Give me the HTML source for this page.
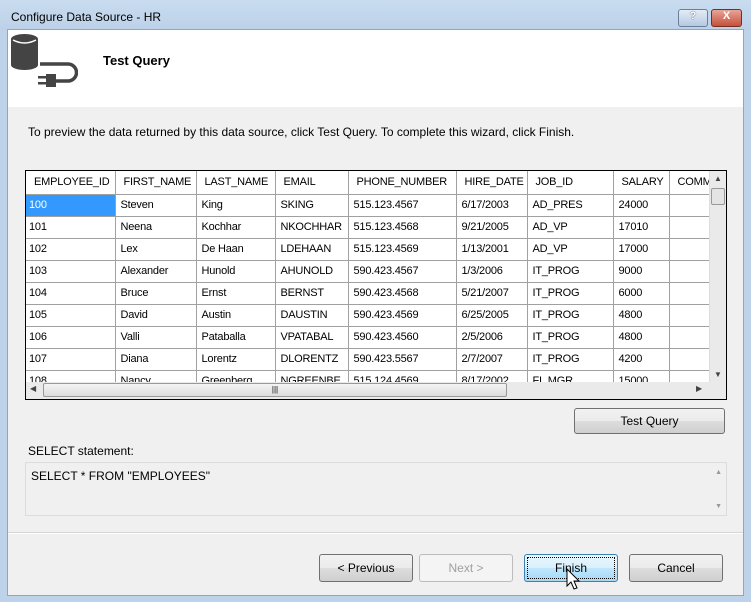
<!DOCTYPE html>
<html><head><style>
*{box-sizing:border-box;margin:0;padding:0}
body{width:751px;height:602px;position:relative;overflow:hidden;background:#bcd3ea;font-family:"Liberation Sans",sans-serif;font-size:12px;color:#000}
.title{position:absolute;left:0;top:0;width:751px;height:30px;background:linear-gradient(#c9dcf0,#bcd1e8)}
.title span{position:absolute;left:11px;top:10px;font-size:12px}
.content{position:absolute;left:7px;top:29px;width:737px;height:567px;background:#f0f0f0;border:1px solid #8ea6c0}
.hdr{position:absolute;left:0;top:0;width:735px;height:77px;background:#fff}
.btn{position:absolute;height:28px;border:1px solid #707070;border-radius:3px;background:linear-gradient(#f2f2f2 0,#ebebeb 50%,#dddddd 51%,#cfcfcf 100%);text-align:center;line-height:26px;font-size:12px}
.grid{position:absolute;left:25px;top:170px;width:702px;height:230px;border:1px solid #000;background:#fff;overflow:hidden}
table{border-collapse:collapse;position:absolute;left:0;top:0;table-layout:fixed;width:703px}
td{border-right:1px solid #a0a0a0;border-bottom:1px solid #a0a0a0;height:22px;padding-left:5px;white-space:nowrap;overflow:hidden;font-size:11px;letter-spacing:-0.2px}
tr.h td{background:#fff;height:23px;padding-left:8px}
</style></head><body>
<div class="title"><span>Configure Data Source - HR</span>
<div style="position:absolute;left:678px;top:9px;width:30px;height:18px;border:1px solid #6b7f99;border-radius:3px;background:linear-gradient(#e3ecf6,#b6c9e0);text-align:center;font-size:11px;color:#fff;font-weight:bold;text-shadow:0 0 1px #000">?</div>
<div style="position:absolute;left:711px;top:9px;width:31px;height:18px;border:1px solid #7a2e22;border-radius:3px;background:linear-gradient(#e8a597,#c4503c);text-align:center;font-size:11px;color:#fff;font-weight:bold">X</div>
</div>
<div class="content">
<div class="hdr">
<svg style="position:absolute;left:2px;top:3px" width="68" height="56" viewBox="0 0 68 56">
<rect x="1" y="4" width="27" height="30" rx="3" fill="#444"/><ellipse cx="14.5" cy="6" rx="13.5" ry="5" fill="#444"/><path d="M3 7 Q14.5 13 26 7" stroke="#fff" stroke-width="1.5" fill="none"/><ellipse cx="14.5" cy="32" rx="13.5" ry="5" fill="#444"/>
<path d="M30 31 H58 A8.5 8.5 0 0 1 58 48 H45" stroke="#444" stroke-width="3.5" fill="none"/>
<rect x="36" y="41" width="10" height="13" fill="#444"/><rect x="28" y="43" width="8" height="2.5" fill="#444"/><rect x="28" y="49" width="8" height="2.5" fill="#444"/>
</svg>
<div style="position:absolute;left:95px;top:23px;font-weight:bold;font-size:13px">Test Query</div>
</div>
<div style="position:absolute;left:20px;top:95px">To preview the data returned by this data source, click Test Query. To complete this wizard, click Finish.</div>
</div>
<div class="grid">
<table>
<colgroup><col style="width:89px"><col style="width:81px"><col style="width:79px"><col style="width:73px"><col style="width:108px"><col style="width:71px"><col style="width:86px"><col style="width:56px"><col style="width:60px"></colgroup>
<tr class="h"><td>EMPLOYEE_ID</td><td>FIRST_NAME</td><td>LAST_NAME</td><td>EMAIL</td><td>PHONE_NUMBER</td><td>HIRE_DATE</td><td>JOB_ID</td><td>SALARY</td><td>COMM</td></tr>
<tr><td style="background:#3399ff;color:#fff;padding-left:3px">100</td><td>Steven</td><td>King</td><td>SKING</td><td>515.123.4567</td><td>6/17/2003</td><td>AD_PRES</td><td>24000</td><td></td></tr>
<tr><td style="padding-left:3px">101</td><td>Neena</td><td>Kochhar</td><td>NKOCHHAR</td><td>515.123.4568</td><td>9/21/2005</td><td>AD_VP</td><td>17010</td><td></td></tr>
<tr><td style="padding-left:3px">102</td><td>Lex</td><td>De Haan</td><td>LDEHAAN</td><td>515.123.4569</td><td>1/13/2001</td><td>AD_VP</td><td>17000</td><td></td></tr>
<tr><td style="padding-left:3px">103</td><td>Alexander</td><td>Hunold</td><td>AHUNOLD</td><td>590.423.4567</td><td>1/3/2006</td><td>IT_PROG</td><td>9000</td><td></td></tr>
<tr><td style="padding-left:3px">104</td><td>Bruce</td><td>Ernst</td><td>BERNST</td><td>590.423.4568</td><td>5/21/2007</td><td>IT_PROG</td><td>6000</td><td></td></tr>
<tr><td style="padding-left:3px">105</td><td>David</td><td>Austin</td><td>DAUSTIN</td><td>590.423.4569</td><td>6/25/2005</td><td>IT_PROG</td><td>4800</td><td></td></tr>
<tr><td style="padding-left:3px">106</td><td>Valli</td><td>Pataballa</td><td>VPATABAL</td><td>590.423.4560</td><td>2/5/2006</td><td>IT_PROG</td><td>4800</td><td></td></tr>
<tr><td style="padding-left:3px">107</td><td>Diana</td><td>Lorentz</td><td>DLORENTZ</td><td>590.423.5567</td><td>2/7/2007</td><td>IT_PROG</td><td>4200</td><td></td></tr>
<tr><td style="padding-left:3px">108</td><td>Nancy</td><td>Greenberg</td><td>NGREENBE</td><td>515.124.4569</td><td>8/17/2002</td><td>FI_MGR</td><td>15000</td><td></td></tr>
</table>
<div style="position:absolute;left:683px;top:0;width:17px;height:211px;background:#eaeaea;border-left:1px solid #ddd">
<div style="text-align:center;font-size:8px;color:#444;margin-top:3px">▲</div>
<div style="position:absolute;left:1px;top:17px;width:14px;height:17px;border:1px solid #999;border-radius:2px;background:#e4e4e4"></div>
<div style="position:absolute;bottom:3px;width:100%;text-align:center;font-size:8px;color:#444">▼</div></div>
<div style="position:absolute;left:0;top:211px;width:700px;height:17px;background:#eaeaea">
<div style="position:absolute;left:4px;top:2px;font-size:8px;color:#444">◀</div>
<div style="position:absolute;left:17px;top:1px;width:464px;height:14px;border:1px solid #999;border-radius:2px;background:linear-gradient(#f4f4f4,#dcdcdc);text-align:center;font-size:8px;line-height:12px">|||</div>
<div style="position:absolute;left:670px;top:2px;font-size:8px;color:#444">▶</div></div>
</div>
<div class="btn" style="left:574px;top:408px;width:151px;height:26px;line-height:24px">Test Query</div>
<div style="position:absolute;left:28px;top:444px">SELECT statement:</div>
<div style="position:absolute;left:25px;top:462px;width:702px;height:54px;border:1px solid #dcdcdc;background:#f0f0f0">
<div style="position:absolute;left:5px;top:6px">SELECT * FROM "EMPLOYEES"</div>
<div style="position:absolute;right:4px;top:6px;font-size:7px;color:#999">▲</div>
<div style="position:absolute;right:4px;bottom:5px;font-size:7px;color:#999">▼</div></div>
<div style="position:absolute;left:8px;top:532px;width:735px;height:1px;background:#d5d5d5"></div>
<div style="position:absolute;left:8px;top:533px;width:735px;height:1px;background:#fff"></div>
<div class="btn" style="left:319px;top:554px;width:94px">&lt; Previous</div>
<div class="btn" style="left:419px;top:554px;width:94px;color:#a0a0a0;border-color:#bcbcbc;background:#f4f4f4">Next &gt;</div>
<div class="btn" style="left:524px;top:554px;width:94px;border-color:#3c7fb1;background:linear-gradient(#eaf6fd 0,#d9f0fc 50%,#bee6fd 51%,#a7d9f5 100%)"><div style="position:absolute;left:2px;top:2px;right:2px;bottom:2px;border:1px dotted #000"></div>Finish</div>
<div class="btn" style="left:629px;top:554px;width:94px">Cancel</div>
<svg style="position:absolute;left:566px;top:568px" width="16" height="24" viewBox="0 0 16 24"><path d="M1 1 L1 18 L5 14 L8 21 L11 20 L8 13 L13 13 Z" fill="#fff" stroke="#000" stroke-width="1"/></svg>
</body></html>
